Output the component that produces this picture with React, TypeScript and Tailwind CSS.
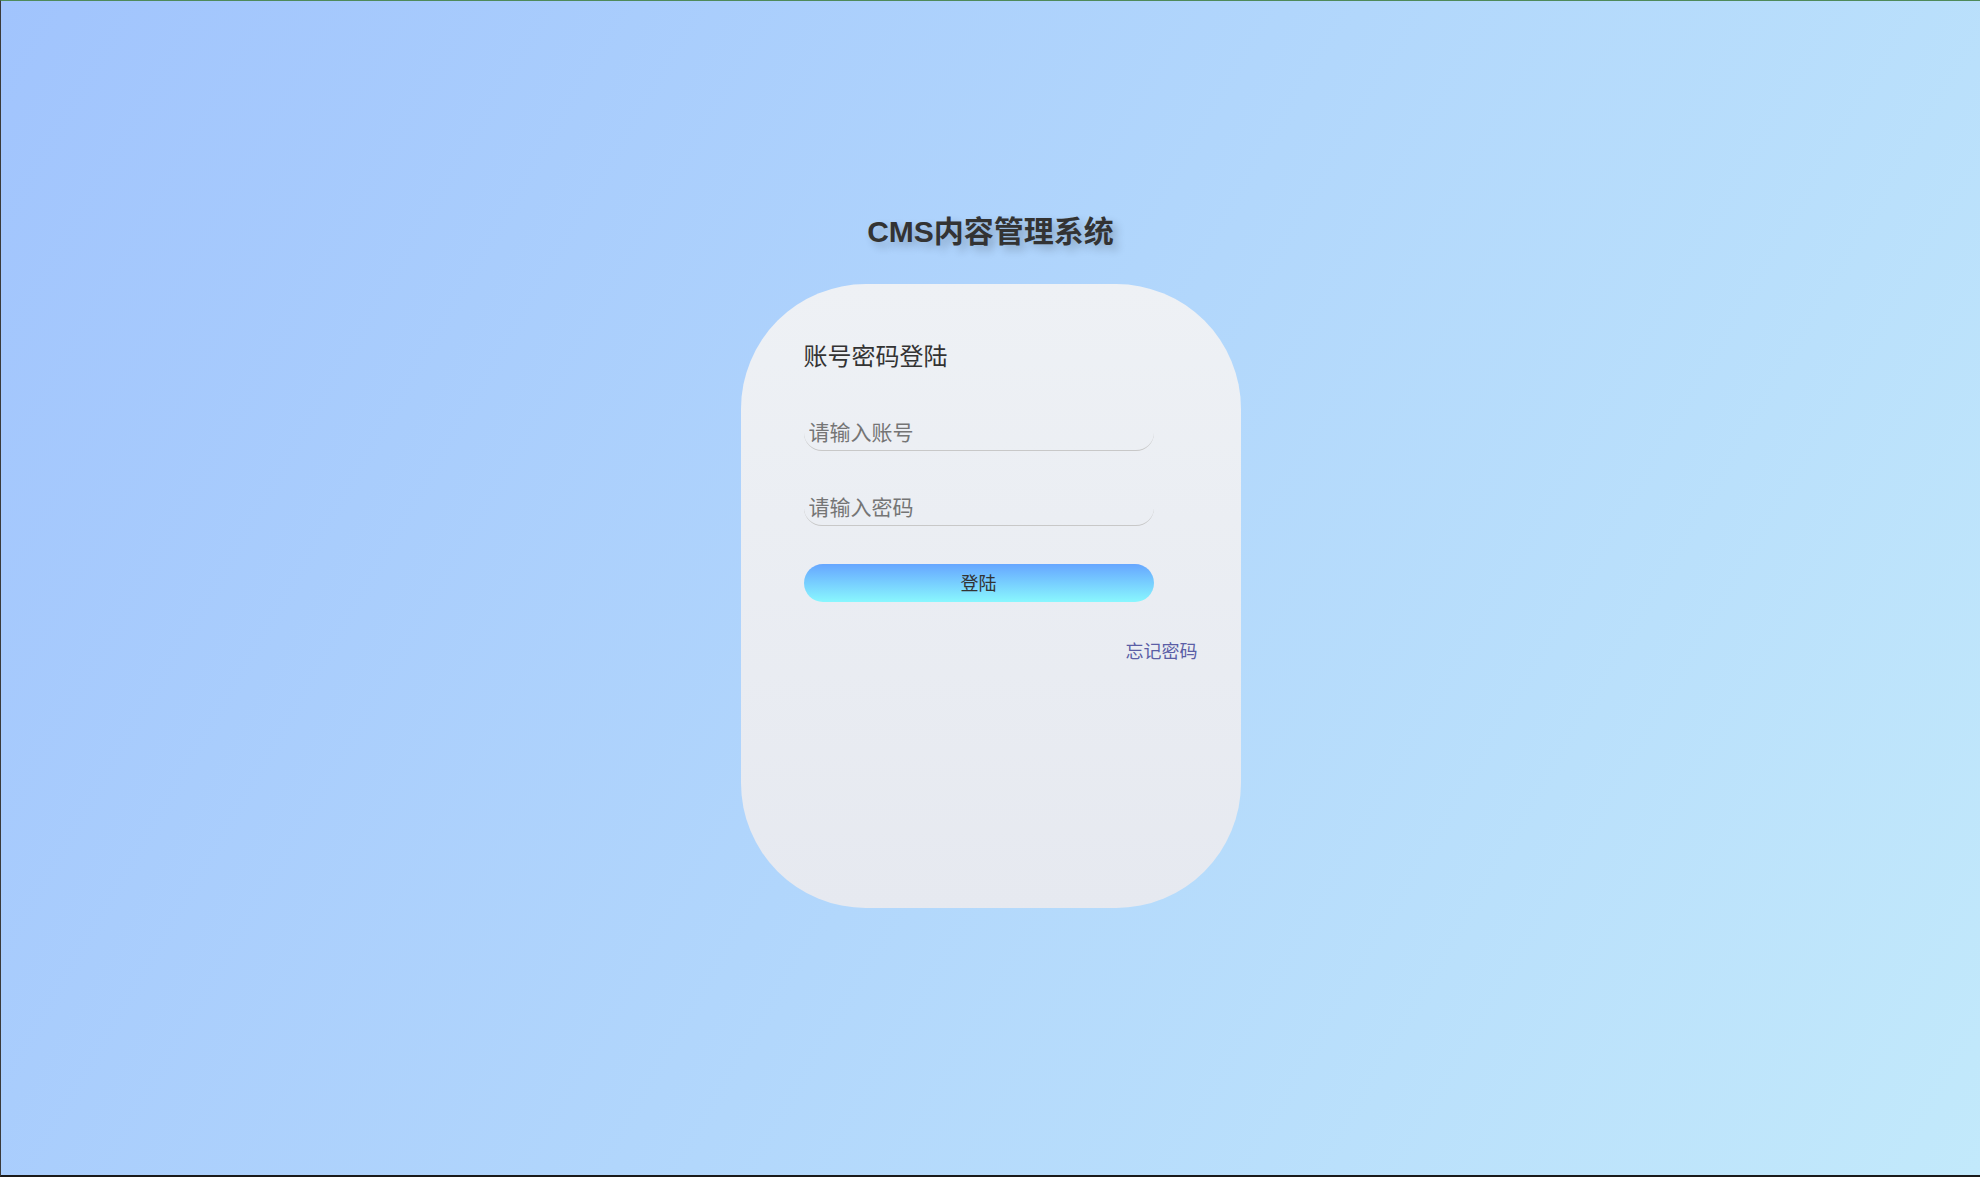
export default function App() {
  return (
    <div className="h-screen w-full overflow-hidden border-t border-l border-b-2 border-t-[#4f8a5a] border-l-[#3a3a3a] border-b-[#1a1a1a] bg-[linear-gradient(120deg,#a1c4fd_0%,#c2e9fb_100%)] font-['Liberation_Sans','Noto_Sans_CJK_SC',sans-serif]">
      <div className="flex flex-col items-center pt-[211px]">
        {/* Title */}
        <h1 className="text-[30px] font-bold leading-[40px] text-[#333] [text-shadow:5px_5px_8px_rgba(0,0,0,0.22)]">
          CMS内容管理系统
        </h1>

        {/* Login card */}
        <div className="mt-[32px] flex h-[624px] w-[500px] flex-col rounded-[125px] bg-[linear-gradient(to_top,#e6e9f0_0%,#eef1f5_100%)] pt-[55px] pl-[63px] pr-[43px]">
          <h2 className="text-[24px] leading-[32px] text-[#333] font-['Noto_Sans_CJK_SC',sans-serif]">账号密码登陆</h2>

          <input
            className="mt-[40px] h-[40px] w-[350px] rounded-[18px] border-b border-[#c8c8c8] bg-transparent pl-[5px] text-[21px] text-[#333] outline-none placeholder:text-[#757575] font-['Noto_Sans_CJK_SC',sans-serif]"
            placeholder="请输入账号"
          />
          <input
            type="password"
            className="mt-[35px] h-[40px] w-[350px] rounded-[18px] border-b border-[#c8c8c8] bg-transparent pl-[5px] text-[21px] text-[#333] outline-none placeholder:text-[#757575] font-['Noto_Sans_CJK_SC',sans-serif]"
            placeholder="请输入密码"
          />

          <button className="mt-[38px] h-[38px] w-[350px] rounded-full bg-[linear-gradient(to_top,#89f7fe_0%,#66a6ff_100%)] pb-[3px] text-[18px] leading-none text-[#333] font-['Noto_Sans_CJK_SC',sans-serif]">
            登陆
          </button>

          <div className="mt-[36px] flex justify-end">
            <a className="cursor-pointer text-[18px] leading-[24px] text-[#5b5ea6] font-['Noto_Sans_CJK_SC',sans-serif]">忘记密码</a>
          </div>
        </div>
      </div>
    </div>
  );
}
